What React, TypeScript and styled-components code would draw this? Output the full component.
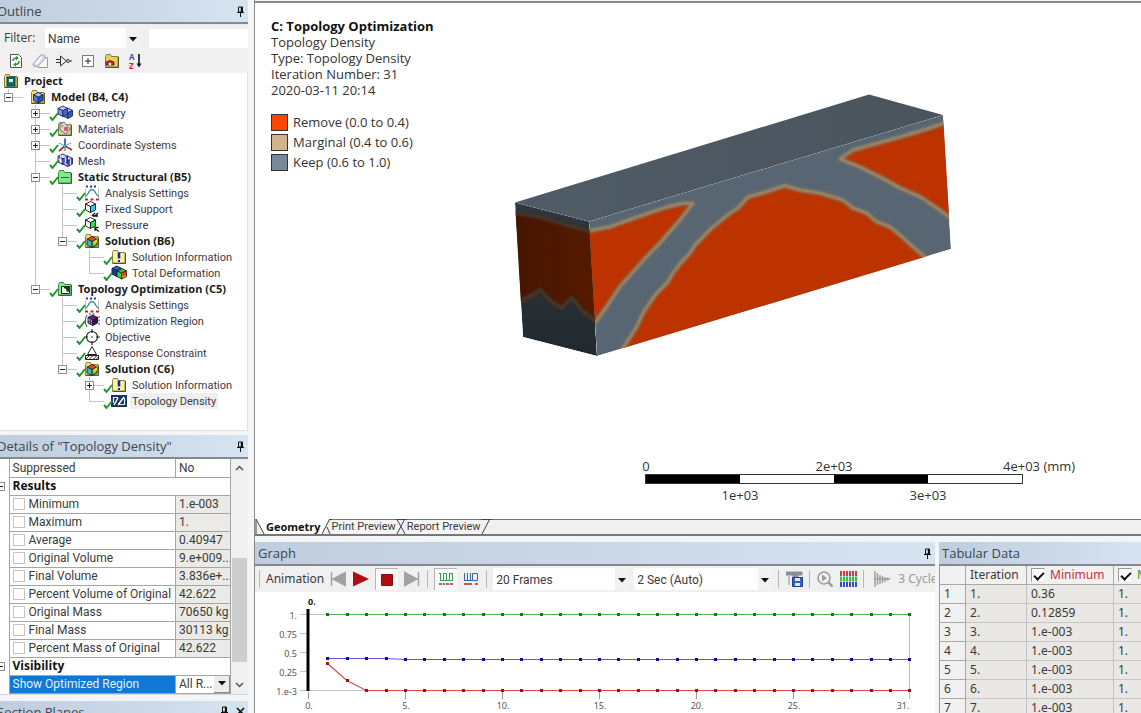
import React from "react";
import styled, { createGlobalStyle, css } from "styled-components";

const ui = `"Noto Sans", "Open Sans", sans-serif`;
const humanist = `"Open Sans", "Noto Sans", sans-serif`;
const compact = `Roboto, "Open Sans", sans-serif`;

const GlobalStyle = createGlobalStyle`
  * { box-sizing: border-box; }
  body { margin: 0; background: #f4f5f7; font: 12px/16px ${ui}; color: #3a3a3a; }
  button, select, input { font: inherit; color: inherit; margin: 0; }
`;

/* ---------- page frame ---------- */

const Workspace = styled.main`
  display: grid;
  grid-template-columns: 248px minmax(0, 1fr);
  column-gap: 6px;
  height: 100vh;
  overflow: hidden;
`;

const Sidebar = styled.div`
  display: flex;
  flex-direction: column;
  min-width: 0;
  overflow: hidden;
`;

const MainArea = styled.div`
  display: grid;
  grid-template-rows: minmax(0, 1fr) 17px 177px;
  min-width: 0;
  padding-top: 1px;
  border-left: 1px solid #8a8a8a;
`;

const TitleBar = styled.header<{ $pull?: boolean }>`
  display: flex;
  align-items: center;
  flex: none;
  height: 24px;
  padding: 0 3px 0 ${(p) => (p.$pull ? "0" : "3px")};
  background: linear-gradient(90deg, #bfcddd, #d6e3f0);
  border-bottom: 2px solid #858a90;
  overflow: hidden;
  h2 {
    flex: 1;
    margin: 0 0 0 ${(p) => (p.$pull ? "-3px" : "0")};
    font: 400 13px/22px ${humanist};
    color: #3c4654;
    white-space: nowrap;
  }
`;

const IconButton = styled.button`
  display: flex;
  align-items: center;
  justify-content: center;
  flex: none;
  padding: 0;
  border: 0;
  background: none;
`;

const Pin = () => (
  <IconButton aria-label="Pin panel">
    <svg width="9" height="11" viewBox="0 0 9 11">
      <path d="M2.500 1h4v5h-4zM1 6.500h7M4.500 7v4" fill="none" stroke="#111" />
      <path d="M5.500 1v5" stroke="#111" strokeWidth="1.400" />
    </svg>
  </IconButton>
);

/* ---------- combo box ---------- */

const ComboFrame = styled.div<{ $width: number; $height: number }>`
  position: relative;
  flex: none;
  width: ${(p) => p.$width}px;
  height: ${(p) => p.$height}px;
  background: #fff;
  font-family: ${compact};
  svg {
    position: absolute;
    right: 0;
    top: 0;
    height: 100%;
    background: #f1f1f1;
    pointer-events: none;
  }
  select {
    width: 100%;
    height: 100%;
    padding: 2px 14px 0 3px;
    border: 0;
    background: none;
    appearance: none;
  }
`;

const Combo = (p: { label: string; value: string; width: number; height: number; id?: string }) => (
  <ComboFrame $width={p.width} $height={p.height}>
    <select id={p.id} aria-label={p.label} defaultValue={p.value}>
      <option>{p.value}</option>
    </select>
    <svg width="14" viewBox="0 0 14 20">
      <path d="M3 9h8l-4 4.500z" fill="#111" />
    </svg>
  </ComboFrame>
);

/* ---------- outline ---------- */

const FilterRow = styled.div`
  display: flex;
  align-items: center;
  flex: none;
  height: 25px;
  padding: 3px 0 0 4px;
  background: #f0f0f0;
  label { width: 41px; font-family: ${humanist}; }
`;

const FilterText = styled.input`
  flex: 1;
  min-width: 0;
  height: 19px;
  margin-left: 9px;
  border: 0;
  background: #fff;
`;

const OutlineTools = styled.div`
  display: flex;
  align-items: center;
  flex: none;
  gap: 8px;
  height: 24px;
  padding-left: 8px;
  background: #f0f0f0;
`;

const Tree = styled.ul`
  flex: none;
  height: 358px;
  margin: 0 0 4px;
  padding: 0 0 0 3px;
  list-style: none;
  background: #fff;
  border-right: 1px solid #e2e2e2;
  border-bottom: 1px solid #e2e2e2;
`;

const TreeRow = styled.li`
  display: flex;
  height: 16px;
  font: 11px/17px ${compact};
  color: #3f3a42;
`;

const guideLine = "linear-gradient(#c4c4c4, #c4c4c4)";
const Guide = styled.span<{ $kind: string }>`
  position: relative;
  flex: none;
  width: 27px;
  height: 16px;
  background-repeat: no-repeat;
  ${(p) => p.$kind === "|" && css`background-image: ${guideLine}; background-size: 1px 16px; background-position: 5px 0;`}
  ${(p) => p.$kind === "T" && css`background-image: ${guideLine}, ${guideLine}; background-size: 1px 16px, 15px 1px; background-position: 5px 0, 5px 8px;`}
  ${(p) => p.$kind === "L" && css`background-image: ${guideLine}, ${guideLine}; background-size: 1px 8px, 15px 1px; background-position: 5px 0, 5px 8px;`}
`;

const Toggle = styled.button`
  display: block;
  width: 9px;
  height: 9px;
  margin: 4px 0 0 1px;
  padding: 0;
  border: 0;
  background: none;
  svg { display: block; }
`;

const CheckMark = styled.svg`
  position: absolute;
  right: -2px;
  top: 7px;
`;

const TreeLabel = styled.span<{ $bold?: boolean; $active?: boolean }>`
  margin-left: 3px;
  padding: 0 2px;
  white-space: nowrap;
  ${(p) => p.$bold && css`font-family: ${ui}; font-weight: 700; line-height: 16px; color: #1c1c1c;`}
  ${(p) => p.$active && css`background: #efefef;`}
`;

const ToggleBox = ({ open }: { open: boolean }) => (
  <svg width="9" height="9" viewBox="0 0 9 9">
    <rect x=".5" y=".5" width="8" height="8" fill="#fff" stroke="#8e8e8e" />
    <path d={open ? "M2 4.500h5" : "M2 4.500h5M4.500 2v5"} stroke="#222" />
  </svg>
);

const FolderShape = ({ fill = "#f0e070", edge = "#86803a" }) => (
  <>
    <path d="M1.500 3.500l1-2h4l1 2h6.500v10.500h-12.500z" fill={fill} stroke={edge} />
    <path d="M14.500 4v10.500h-13" fill="none" stroke="#55522c" />
  </>
);

const Cube = ({ x, y, s, top, left, right, edge }: { x: number; y: number; s: number; top: string; left: string; right: string; edge: string }) => (
  <g transform={`translate(${x} ${y}) scale(${s})`} stroke={edge} strokeWidth={0.9 / s} strokeLinejoin="round">
    <path d="M0 2.500L5 0l5 2.500-5 2.500z" fill={top} />
    <path d="M0 2.500l5 2.500v6l-5-2.500z" fill={left} />
    <path d="M10 2.500l-5 2.500v6l5-2.500z" fill={right} />
  </g>
);

const treeIcons: Record<string, React.ReactNode> = {
  project: (
    <>
      <FolderShape />
      <rect x="4" y="4" width="8" height="9" fill="#0d6f6c" stroke="#063c3a" />
      <path d="M6 6h4v3h-4z" fill="#d9f4f2" />
    </>
  ),
  model: (
    <>
      <FolderShape />
      <Cube x={3.5} y={3.5} s={0.95} top="#a9c3f5" left="#4c7be0" right="#2b55b8" edge="#14265c" />
    </>
  ),
  geometry: (
    <>
      <Cube x={6} y={3} s={0.95} top="#a9b9ee" left="#5a78d8" right="#3d57b8" edge="#1b2a68" />
      <Cube x={1} y={1} s={0.95} top="#b9c7f4" left="#7f99e6" right="#4b66c9" edge="#1b2a68" />
    </>
  ),
  materials: (
    <>
      <FolderShape fill="#dcd68a" />
      <path d="M3 3l4-2 6 7-4 5-6-4z" fill="#d8d8dc" stroke="#77777c" />
      <circle cx="9" cy="8" r="2.200" fill="#d2566c" />
      <circle cx="5" cy="5" r="1" fill="#fff" stroke="#666" strokeWidth=".6" />
    </>
  ),
  coords: (
    <>
      <path d="M8 9V1.500" stroke="#1d42d8" strokeWidth="1.600" />
      <path d="M8 9L2 14" stroke="#cf1b2b" strokeWidth="1.800" />
      <path d="M8 9l7 4" stroke="#cf1b2b" strokeWidth="1.600" />
      <path d="M8 9l-6-3M8 9l6-3" stroke="#3ac2cf" strokeWidth="1.200" />
      <path d="M8 9v5" stroke="#2fae49" strokeWidth="1.400" />
    </>
  ),
  mesh: (
    <>
      <Cube x={6} y={3} s={0.95} top="#cdd0f7" left="#8187dc" right="#5157b4" edge="#1f2168" />
      <Cube x={1} y={1} s={0.95} top="#cdd0f7" left="#989ee6" right="#6168c4" edge="#1f2168" />
      <path d="M3.500 4v6M8.500 4v6M13.500 6v6M1.500 6.500l4 2M7 10l4 2M3 2.500l5 2.500" stroke="#f2f2ff" strokeWidth=".8" />
    </>
  ),
  environment: (
    <>
      <FolderShape fill="#7fe88b" edge="#3b8e44" />
      <path d="M4 8.500h8" stroke="#2c6e35" />
    </>
  ),
  settings: (
    <>
      <path d="M1.500 3v10M14.500 3v10" stroke="#c4c4c4" />
      <path d="M1 11.500c3 0 3.500-7 7-7s4 7 7 7" fill="none" stroke="#3f8f7c" strokeWidth="1.300" />
      <path d="M2 1.500h2M6 1.500h2M10 1.500h2" stroke="#2438c8" strokeWidth="2" />
      <path d="M1 14.500h3M6.500 14.500h3M12 14.500h3" stroke="#c6202c" strokeWidth="1.800" />
    </>
  ),
  fixed: (
    <>
      <Cube x={1.5} y={0.5} s={1} top="#fff" left="#f3f3f3" right="#35c6f0" edge="#1a1a1a" />
      <path d="M8 15l3-3M11 15l3-3M9 15h5" stroke="#111" strokeWidth="1.300" />
    </>
  ),
  pressure: (
    <>
      <Cube x={1.5} y={0.5} s={1} top="#fff" left="#f3f3f3" right="#2fe048" edge="#1a1a1a" />
      <path d="M15 14.500l-4-3M11 14v-3.500h3.500" fill="none" stroke="#111" strokeWidth="1.300" />
    </>
  ),
  solution: (
    <>
      <FolderShape />
      <Cube x={3} y={3.5} s={1} top="#e8402c" left="#29b8d8" right="#38c23c" edge="#2b2b1c" />
      <path d="M9 9l4-3v3l-3 3z" fill="#f2d21f" />
    </>
  ),
  info: (
    <>
      <FolderShape fill="#fbf0a4" />
      <path d="M8 3.500v6" stroke="#1a25b8" strokeWidth="2.600" />
      <path d="M8 11v2" stroke="#1a25b8" strokeWidth="2" />
    </>
  ),
  deformation: (
    <>
      <Cube x={1} y={1} s={0.95} top="#2a5be0" left="#1837b4" right="#22b8c4" edge="#141a3c" />
      <Cube x={6} y={3.5} s={0.95} top="#2fbf46" left="#3fd24e" right="#e8a626" edge="#252510" />
      <path d="M12 8l3.500-1.500v3L12 11z" fill="#e3342a" />
    </>
  ),
  optimization: (
    <>
      <FolderShape fill="#8fe793" edge="#3b8e44" />
      <path d="M4.500 5.500h8v7h-8z" fill="#eafbe9" stroke="#222" />
      <path d="M7 5h6v5l-3 1-1-3-2-1z" fill="#1f3324" />
    </>
  ),
  region: (
    <>
      <path d="M5 1h7M15 3v9" stroke="#333" strokeDasharray="2 1.500" />
      <path d="M3 2q-3.500 6 0 12" fill="none" stroke="#444" />
      <Cube x={4} y={2} s={0.95} top="#5b2a78" left="#c48be4" right="#2c1640" edge="#1e0e2c" />
      <path d="M6.500 5v6.500M4 8l5 2" stroke="#3a1c50" strokeWidth=".8" />
    </>
  ),
  objective: (
    <g fill="none" stroke="#222" strokeWidth="1.200">
      <circle cx="8" cy="8" r="5.500" />
      <path d="M8 0v4M8 12v4M0 8h4M12 8h4" />
      <circle cx="8" cy="8" r=".8" fill="#111" stroke="none" />
    </g>
  ),
  constraint: (
    <g fill="none" stroke="#222">
      <path d="M8 1.500l-4.500 8h9z" />
      <path d="M1 10.500h14M1.500 10.500v4h13v-4M2 14l3.500-3.500M5 14.500l4-4M9 14.500l4-4M12 14.500l2.500-2.500" />
    </g>
  ),
  density: (
    <>
      <path d="M0 2h16v12H0z" fill="#16365e" />
      <path d="M2.500 10V4.500H7M13.500 5v6.500H8" fill="none" stroke="#e8f0f8" strokeWidth="1.200" />
      <path d="M3 12L7 5M7 12l6-8" stroke="#fff" strokeWidth="1.500" />
    </>
  ),
};

interface TreeItem {
  label: string;
  icon: string;
  guides?: string;
  bold?: boolean;
  toggle?: "open" | "closed";
  active?: boolean;
}

const outline: TreeItem[] = [
  { label: "Project", icon: "project", bold: true },
  { label: "Model (B4, C4)", icon: "model", guides: "L", bold: true, toggle: "open" },
  { label: "Geometry", icon: "geometry", guides: " T", toggle: "closed" },
  { label: "Materials", icon: "materials", guides: " T", toggle: "closed" },
  { label: "Coordinate Systems", icon: "coords", guides: " T", toggle: "closed" },
  { label: "Mesh", icon: "mesh", guides: " T" },
  { label: "Static Structural (B5)", icon: "environment", guides: " T", bold: true, toggle: "open" },
  { label: "Analysis Settings", icon: "settings", guides: " |T" },
  { label: "Fixed Support", icon: "fixed", guides: " |T" },
  { label: "Pressure", icon: "pressure", guides: " |T" },
  { label: "Solution (B6)", icon: "solution", guides: " |L", bold: true, toggle: "open" },
  { label: "Solution Information", icon: "info", guides: " | T" },
  { label: "Total Deformation", icon: "deformation", guides: " | L" },
  { label: "Topology Optimization (C5)", icon: "optimization", guides: " L", bold: true, toggle: "open" },
  { label: "Analysis Settings", icon: "settings", guides: "  T" },
  { label: "Optimization Region", icon: "region", guides: "  T" },
  { label: "Objective", icon: "objective", guides: "  T" },
  { label: "Response Constraint", icon: "constraint", guides: "  T" },
  { label: "Solution (C6)", icon: "solution", guides: "  L", bold: true, toggle: "open" },
  { label: "Solution Information", icon: "info", guides: "   T", toggle: "closed" },
  { label: "Topology Density", icon: "density", guides: "   L", active: true },
];

const OutlineTree = () => (
  <Tree>
    {outline.map((item, n) => {
      const guides = [...(item.guides ?? "")];
      return (
        <TreeRow key={n}>
          {guides.map((kind, g) => {
            const own = g === guides.length - 1;
            return (
              <Guide key={g} $kind={kind}>
                {own && item.toggle && (
                  <Toggle aria-label={`Toggle ${item.label}`}>
                    <ToggleBox open={item.toggle === "open"} />
                  </Toggle>
                )}
                {own && g > 0 && (
                  <CheckMark width="10" height="9" viewBox="0 0 10 9">
                    <path d="M1 5l2.500 3L9 1" fill="none" stroke="#1f9a2c" strokeWidth="2" />
                  </CheckMark>
                )}
              </Guide>
            );
          })}
          <svg width="16" height="16" viewBox="0 0 16 16">{treeIcons[item.icon]}</svg>
          <TreeLabel $bold={item.bold} $active={item.active}>{item.label}</TreeLabel>
        </TreeRow>
      );
    })}
  </Tree>
);

const outlineTools: [string, React.ReactNode][] = [
  ["Refresh", <>
    <path d="M2.500 1.500h8l3 3v10h-11z" fill="#fff" stroke="#555" />
    <path d="M5 8q0-3 4-3M11 8q0 3.500-4 3.500" fill="none" stroke="#2a9a3a" strokeWidth="1.600" />
    <path d="M8 2.800l3 2.200-3 2.200zM8 9.300l-3 2.200 3 2.200z" fill="#2a9a3a" />
  </>],
  ["Tag", <>
    <path d="M6.500 4.500h9v10h-9z" fill="#f8f8f8" stroke="#9a9a9a" />
    <path d="M1 11l8-9.500 3.500 1 1 3-8 8-3.500 0z" fill="#d4d4e8" stroke="#a8a8c0" />
    <path d="M4 11l6-7" stroke="#fff" strokeWidth="2" />
  </>],
  ["Filter", <path d="M4.500 3v10l6-5zM0 6.500h4M0 9.500h4M13 8h3M12 6.500a1.500 1.500 0 1 1 0 3 1.500 1.500 0 0 1 0-3" fill="none" stroke="#333" />],
  ["Expand", <>
    <rect x="2.500" y="2.500" width="11" height="11" fill="#fff" stroke="#777" />
    <path d="M5 8h6M8 5v6" stroke="#222" />
  </>],
  ["Hide folders", <>
    <FolderShape fill="#e6cf62" />
    <path d="M2 9q4-3 8 0v3h-8z" fill="#c4302c" stroke="#5c1512" strokeWidth=".8" />
    <circle cx="6" cy="11" r="1.300" fill="#fff" />
  </>],
  ["Sort", <>
    <text x="1" y="7" fontSize="8" fontWeight="700" fill="#2b5fb4">A</text>
    <text x="1" y="16" fontSize="8" fontWeight="700" fill="#c0272d">Z</text>
    <path d="M11 1v11" stroke="#111" strokeWidth="1.600" />
    <path d="M8.500 10.500h5l-2.500 4z" fill="#111" />
  </>],
];

/* ---------- details ---------- */

const DetailsBody = styled.div`
  display: grid;
  grid-template-columns: minmax(0, 1fr) 17px;
  flex: none;
  background: #fff;
  border-bottom: 1px solid #d8d8d8;
`;

const Col = styled.col<{ $width?: number }>`
  width: ${(p) => (p.$width ? `${p.$width}px` : "auto")};
`;

const DetailsTable = styled.table`
  width: 100%;
  table-layout: fixed;
  border-collapse: collapse;
  font-family: ${compact};
  line-height: 16px;
  th, td {
    height: 18px;
    padding: 0 0 0 3px;
    border: 1px solid #a5a5a5;
    border-top: 0;
    font-weight: 400;
    text-align: left;
    white-space: nowrap;
    overflow: hidden;
  }
`;

const Gutter = styled.td`
  && { border: 0; padding: 0; background: #fff; }
  button { margin: 0 0 0 -4px; }
`;

const GroupCell = styled.th`
  && { font-family: ${humanist}; font-weight: 700; color: #111; }
`;

const ValueCell = styled.td<{ $plain?: boolean }>`
  background: ${(p) => (p.$plain ? "#fff" : "#ebeae7")};
`;

const NameCell = styled.th<{ $selected?: boolean }>`
  ${(p) => p.$selected && css`background: #0f78d4; color: #e4f0fb;`}
`;

const NameLine = styled.label`
  display: flex;
  align-items: center;
  gap: 4px;
`;

const SmallCheck = styled.input`
  flex: none;
  appearance: none;
  width: 12px;
  height: 12px;
  border: 1px solid #c4c4c4;
  background: #fff;
`;

const RegionPicker = styled.div`
  display: flex;
  height: 17px;
  line-height: 17px;
  span { flex: 1; }
  button {
    width: 16px;
    border: 1px solid #8c8c8c;
    border-width: 0 1px 1px 0;
    background: #ececec;
  }
`;

const ScrollTrack = styled.div`
  display: flex;
  flex-direction: column;
  align-items: center;
  background: #f0f0f0;
`;

const ScrollArrow = styled(IconButton)<{ $height: number }>`
  width: 17px;
  height: ${(p) => p.$height}px;
  padding-top: ${(p) => p.$height - 18}px;
`;

const ScrollThumb = styled.div`
  width: 15px;
  height: 104px;
  margin-top: auto;
  background: #cdcdcd;
`;

const results: [string, string][] = [
  ["Minimum", "1.e-003"],
  ["Maximum", "1."],
  ["Average", "0.40947"],
  ["Original Volume", "9.e+009..."],
  ["Final Volume", "3.836e+..."],
  ["Percent Volume of Original", "42.622"],
  ["Original Mass", "70650 kg"],
  ["Final Mass", "30113 kg"],
  ["Percent Mass of Original", "42.622"],
];

const Group = ({ name }: { name: string }) => (
  <tr>
    <Gutter><Toggle aria-label={`Collapse ${name}`}><ToggleBox open /></Toggle></Gutter>
    <GroupCell colSpan={2}>{name}</GroupCell>
  </tr>
);

const Details = () => (
  <DetailsBody>
    <DetailsTable>
      <colgroup><Col $width={9} /><Col /><Col $width={55} /></colgroup>
      <tbody>
        <tr><Gutter /><NameCell>Suppressed</NameCell><ValueCell $plain>No</ValueCell></tr>
        <Group name="Results" />
        {results.map(([name, value]) => (
          <tr key={name}>
            <Gutter />
            <NameCell><NameLine><SmallCheck type="checkbox" />{name}</NameLine></NameCell>
            <ValueCell>{value}</ValueCell>
          </tr>
        ))}
        <Group name="Visibility" />
        <tr>
          <Gutter />
          <NameCell $selected>Show Optimized Region</NameCell>
          <ValueCell $plain>
            <RegionPicker>
              <span>All R...</span>
              <IconButton aria-label="Choose region">
                <svg width="8" height="5" viewBox="0 0 8 5"><path d="M0 0h8L4 4.500z" fill="#111" /></svg>
              </IconButton>
            </RegionPicker>
          </ValueCell>
        </tr>
      </tbody>
    </DetailsTable>
    <ScrollTrack>
      <ScrollArrow aria-label="Scroll up" $height={18}>
        <svg width="9" height="6" viewBox="0 0 9 6"><path d="M1 5l3.500-3.500L8 5" fill="none" stroke="#555" strokeWidth="1.500" /></svg>
      </ScrollArrow>
      <ScrollThumb />
      <ScrollArrow aria-label="Scroll down" $height={32}>
        <svg width="9" height="6" viewBox="0 0 9 6"><path d="M1 1l3.500 3.500L8 1" fill="none" stroke="#555" strokeWidth="1.500" /></svg>
      </ScrollArrow>
    </ScrollTrack>
  </DetailsBody>
);

const SectionTitle = styled(TitleBar)`
  margin-top: 6px;
  gap: 7px;
`;

/* ---------- viewer ---------- */

const Viewer = styled.section`
  display: grid;
  grid-template-rows: minmax(0, 1fr) auto;
  min-height: 0;
  padding: 15px 0 16px;
  background: #fff;
  border-top: 2px solid #8a8a8a;
  font: 13px/16px ${humanist};
  color: #333;
`;

const Annotation = styled.div`
  grid-area: 1 / 1;
  padding-left: 16px;
  h1 { margin: 0; font-size: 13px; font-weight: 700; line-height: 16px; color: #111; }
  p { margin: 0; }
`;

const Legend = styled.ul`
  margin: 14px 0 0;
  padding: 0;
  list-style: none;
  li { display: flex; align-items: center; gap: 5px; height: 20px; }
`;

const Swatch = styled.span<{ $color: string }>`
  width: 17px;
  height: 17px;
  border: 1px solid #333;
  background: ${(p) => p.$color};
`;

const ModelDrawing = styled.svg`
  grid-area: 1 / 1;
  justify-self: center;
  margin: 74px 0 0 72px;
`;

const Ruler = styled.div`
  grid-area: 2 / 1;
  justify-self: center;
  display: grid;
  grid-template-columns: repeat(5, 94px);
  margin-left: 272px;
  text-align: center;
  white-space: nowrap;
`;

const UnitLabel = styled.span`
  padding-left: 28px;
  text-align: left;
`;

const RulerBar = styled.div`
  grid-column: 1 / -1;
  display: grid;
  grid-template-columns: repeat(4, 1fr);
  height: 10px;
  margin: 0 46px 3px;
  border: 1px solid #333;
  span:nth-child(odd) { background: #000; }
`;

const TanEdge = ({ d }: { d: string }) => (
  <g fill="none" strokeLinejoin="round" filter="url(#soften)">
    <path d={d} stroke="#706c62" strokeWidth="5" />
    <path d={d} stroke="#ae8f63" strokeWidth="2" />
  </g>
);

const leftVoid = "M586 231.500L590.700 230.500L610 226.700L633 218.500L667 207L683 203.300L693 203.300L680 220L660 243L646.700 256.700L620 286.700L606.700 306.700L596.700 320.700L586 334";
const archVoid = "M618 358L624 346.700L636.700 326.700L643 313L655 295L667 283L673 273L681.700 261.700L690 253L695 245L711.700 228L730 213L738 208L748 197L766.700 191.700L785 185.500L800 190L820 193L843 200L853 208L866.700 213L876.700 221.700L890 226.700L900 235L913 246.700L925 257L934 266";
const rightVoid = "M956 119L944 123.300L926.700 129L906.700 135L883 141.700L853 150L840 159L860 167L880 177L900 188L920 196.700L936.700 208L956 222";
const endVoid = "M508 212L516 213L540 217L567 225L600 234L604 324L595 320L583 311.700L571.700 298L561.700 308L551.700 301.700L540 290L533 295L521.700 300.700L508 304";

const Beam = () => (
  <ModelDrawing width="444" height="268" viewBox="512 92 444 268" role="img" aria-label="Optimized beam">
    <defs>
      <clipPath id="front"><path d="M589 221.500L943 115L951 249L597 356z" /></clipPath>
      <clipPath id="end"><path d="M515 202.500L589 221.500L597 356L523 337z" /></clipPath>
      <filter id="soften" filterUnits="userSpaceOnUse" x="500" y="90" width="470" height="290"><feGaussianBlur stdDeviation=".8" /></filter>
      <linearGradient id="endVoidShade" x1="0" x2="1"><stop offset="0" stopColor="#451500" /><stop offset="1" stopColor="#571b00" /></linearGradient>
      <linearGradient id="endShade" x1="0" x2="0" y1="0" y2="1"><stop offset="0" stopColor="#30383f" /><stop offset="1" stopColor="#22292e" /></linearGradient>
      <linearGradient id="topShade" x1="0" x2="1"><stop offset="0" stopColor="#4f5b66" /><stop offset="1" stopColor="#4a545d" /></linearGradient>
    </defs>
    <path d="M515 202.500L869 94.500L943 115L589 221.500z" fill="url(#topShade)" />
    <g clipPath="url(#front)">
      <path d="M589 221.500L943 115L951 249L597 356z" fill="#586673" />
      {[leftVoid, archVoid, rightVoid].map((d) => (
        <g key={d}>
          <path d={d} fill="#bd3300" />
          <TanEdge d={d} />
        </g>
      ))}
    </g>
    <g clipPath="url(#end)">
      <path d="M515 202.500L589 221.500L597 356L523 337z" fill="url(#endShade)" />
      <path d={endVoid} fill="url(#endVoidShade)" />
      <g fill="none" filter="url(#soften)">
        <path d={endVoid} stroke="#3d2c20" strokeWidth="5" />
        <path d={endVoid} stroke="#4a3c2c" strokeWidth="2" />
      </g>
    </g>
  </ModelDrawing>
);

/* ---------- view tabs ---------- */

const TabStrip = styled.nav`
  display: flex;
  background: #f0f0f0;
  border-bottom: 2px solid #777;
  font: 11px/14px ${compact};
`;

const TabButton = styled.button<{ $active?: boolean }>`
  height: 15px;
  padding: 0;
  border: 0;
  border-top: 1px solid ${(p) => (p.$active ? "#fff" : "#777")};
  background: ${(p) => (p.$active ? "#fff" : "#f5f5f5")};
  color: #3a3a3a;
  ${(p) => p.$active && css`font-family: ${humanist}; font-weight: 700; color: #111;`}
`;

const TabRest = styled.div`
  flex: 1;
  border-top: 1px solid #777;
`;

const TabEdge = ({ d, fill }: { d: string; fill?: string }) => (
  <svg width="11" height="15" viewBox="0 0 11 15">
    {fill && <path d={fill} fill="#fff" />}
    <path d={d} fill="none" stroke="#444" />
  </svg>
);

/* ---------- graph ---------- */

const BottomRow = styled.div`
  display: grid;
  grid-template-columns: minmax(0, 1fr) 202px;
  column-gap: 4px;
  min-width: 0;
  padding-top: 6px;
`;

const Panel = styled.section`
  min-width: 0;
  overflow: hidden;
  background: #fff;
`;

const GraphTools = styled.div`
  display: flex;
  align-items: center;
  height: 26px;
  padding-left: 3px;
  gap: 5px;
  background: #f0f0f0;
  white-space: nowrap;
  overflow: hidden;
`;

const ToolButton = styled(IconButton)<{ $pressed?: boolean; $width?: number }>`
  width: ${(p) => p.$width ?? 18}px;
  height: 22px;
  ${(p) => p.$pressed && css`background: #fafafa; border: 1px solid #b5b5b5; border-width: 1px 0 0 1px;`}
`;

const Divider = styled.span`
  flex: none;
  width: 1px;
  height: 18px;
  margin: 0 1px;
  background: #b8b8b8;
`;

const CyclesText = styled.span`
  color: #9a9a9a;
`;

const Chart = styled.svg`
  display: block;
  font: 9px ${ui};
  fill: #555;
`;

const px = (i: number) => 53 + i * 19.4;
const steps = Array.from({ length: 31 }, (_, i) => i + 1);
const yMax = () => 22;
const yAvg = (i: number) => (i < 5 ? 66 : 67);
const yMin = (i: number) => (i === 1 ? 71 : i === 2 ? 88 : 98);

const Series = ({ y, line, dot }: { y: (i: number) => number; line: string; dot: string }) => (
  <g>
    <polyline points={steps.map((i) => `${px(i)},${y(i) + 0.5}`).join(" ")} fill="none" stroke={line} strokeWidth="1.200" />
    {steps.map((i) => <rect key={i} x={Math.round(px(i)) - 1} y={y(i) - 1} width="3" height="3" fill={dot} />)}
  </g>
);

const IterationChart = () => (
  <Chart width="680" height="121" viewBox="0 0 680 121">
    <path d="M45 22.500h27M45 41.500h7M45 60.500h7M45 79.500h7M45 98.500h65" stroke="#c4c4c4" />
    {([["1.", 23], ["0.75", 42], ["0.5", 61], ["0.25", 80], ["1.e-3", 99]] as [string, number][]).map(([t, y]) => (
      <text key={t} x="42" y={y + 4} textAnchor="end">{t}</text>
    ))}
    {[0, 5, 10, 15, 20, 25].map((i) => (
      <g key={i}>
        <path d={`M${Math.round(px(i)) + 0.5} 100v7`} stroke="#c08a8a" />
        <text x={px(i) + 1} y="117" textAnchor="middle">{`${i}.`}</text>
      </g>
    ))}
    <path d={`M${Math.round(px(31)) + 0.5} 23v84`} stroke="#bdbdbd" />
    <text x={px(31)} y="117" textAnchor="end">31.</text>
    <path d="M53 17v82" stroke="#000" strokeWidth="3" />
    <text x="53" y="13" fontWeight="700" fill="#222">0.</text>
    <Series y={yMax} line="#58b058" dot="#0a7d14" />
    <Series y={yAvg} line="#5a5ae0" dot="#0c0ca4" />
    <Series y={yMin} line="#d84a4a" dot="#a80c14" />
  </Chart>
);

const Graph = () => (
  <Panel>
    <TitleBar><h2>Graph</h2><Pin /></TitleBar>
    <GraphTools>
      <Divider />
      <span>Animation</span>
      <ToolButton aria-label="First frame">
        <svg width="16" height="16"><path d="M1.500 1v14M16 1v14L3 8z" fill="#a2a2a2" stroke="#a2a2a2" strokeWidth="1.500" /></svg>
      </ToolButton>
      <ToolButton aria-label="Play">
        <svg width="16" height="16"><path d="M0 0.500l16 7.500-16 7.500z" fill="#b00c12" /></svg>
      </ToolButton>
      <ToolButton aria-label="Stop" $pressed $width={23}>
        <svg width="12" height="12"><path d="M.5.500h11v11h-11z" fill="#b00c12" stroke="#8c0a10" /></svg>
      </ToolButton>
      <ToolButton aria-label="Last frame">
        <svg width="16" height="16"><path d="M14.500 1v14M0 1v14L13 8z" fill="#a2a2a2" stroke="#a2a2a2" strokeWidth="1.500" /></svg>
      </ToolButton>
      <Divider />
      <ToolButton aria-label="Distributed" $pressed $width={23}>
        <svg width="15" height="13"><path d="M0 .5h2M1.500 0v8M4.500 0v8M7.500 0v8M10.500 0v8M13.500 0v8M1 7.500h13M4 .5h3M10 .5h4" fill="none" stroke="#3f9a4c" /><path d="M0 11h3M4 11h2M7 11h3M11 11h3" stroke="#b8202c" strokeWidth="1.500" /></svg>
      </ToolButton>
      <ToolButton aria-label="Result sets">
        <svg width="15" height="13"><path d="M.5 0v8M3.500 0v8M6.500 0v8M8.500.500h5v7h-5zM0 7.500h8" fill="none" stroke="#3c62b8" /><path d="M0 11h8M11 11h3" stroke="#b8202c" strokeWidth="1.500" /></svg>
      </ToolButton>
      <Divider />
      <Combo label="Frames" value="20 Frames" width={136} height={22} />
      <Combo label="Duration" value="2 Sec (Auto)" width={138} height={22} />
      <Divider />
      <ToolButton aria-label="Export video">
        <svg width="17" height="16"><path d="M0 1h16v3h-4v3h-5v-3h-7zM3 5v9" fill="#8a9096" stroke="#8a9096" /><path d="M6.500 6.500h10v9h-10z" fill="#3764c4" stroke="#1e3f8c" /><path d="M9 7h5v3h-5zM9 12h5v3h-5z" fill="#dfe8f8" /></svg>
      </ToolButton>
      <Divider />
      <ToolButton aria-label="Zoom to fit">
        <svg width="17" height="16"><g fill="none" stroke="#9a9a9a" strokeWidth="1.500"><circle cx="7" cy="7" r="6" /><path d="M11.500 11.500l4 4" strokeWidth="2.400" /></g><path d="M5 3.500l5 3.500-5 3.500z" fill="#9a9a9a" /></svg>
      </ToolButton>
      <ToolButton aria-label="Contour bands">
        <svg width="17" height="16"><g strokeWidth="5" strokeDasharray="2 1"><path d="M0 2.500h17" stroke="#e0344a" /><path d="M0 8h17" stroke="#2fc04a" /><path d="M0 13.500h17" stroke="#3a48d0" /></g></svg>
      </ToolButton>
      <Divider />
      <ToolButton aria-label="Cycles" $width={23}>
        <svg width="16" height="16"><path d="M1 0v16M3.500 2v12M6 4v9M8.500 5v7M11 6v5M13.500 6.500v3M0 8h16" stroke="#a0a0a0" strokeWidth="1.500" /></svg>
      </ToolButton>
      <CyclesText>3 Cycles</CyclesText>
    </GraphTools>
    <IterationChart />
  </Panel>
);

/* ---------- tabular data ---------- */

const DataTable = styled.table`
  width: 280px;
  table-layout: fixed;
  border-collapse: collapse;
  border-left: 1px solid #9a9a9a;
  line-height: 16px;
  th, td {
    height: 19px;
    padding: 0 0 0 4px;
    border-right: 1px solid #c2c2c2;
    border-bottom: 1px solid #c6c6c6;
    background: #e9e8e5;
    font-weight: 400;
    text-align: left;
    white-space: nowrap;
  }
  th { background: #f1f1f1; border-color: #a8a8a8; }
  thead th { height: 18px; }
`;

const SeriesHead = styled.label<{ $color: string }>`
  display: flex;
  align-items: center;
  gap: 5px;
  color: ${(p) => p.$color};
`;

const HeadCheck = styled.input`
  appearance: none;
  width: 14px;
  height: 14px;
  border: 1px solid #999;
  border-right-color: #eee;
  border-bottom-color: #eee;
  background: #fff;
  position: relative;
  &:checked::after {
    content: "";
    position: absolute;
    left: 4px;
    top: 1px;
    width: 4px;
    height: 8px;
    border: solid #111;
    border-width: 0 2px 2px 0;
    transform: rotate(45deg);
  }
`;

const minima = ["0.36", "0.12859", "1.e-003", "1.e-003", "1.e-003", "1.e-003", "1.e-003"];

const TabularData = () => (
  <Panel>
    <TitleBar><h2>Tabular Data</h2></TitleBar>
    <DataTable>
      <colgroup><Col $width={26} /><Col $width={61} /><Col $width={87} /><Col /></colgroup>
      <thead>
        <tr>
          <th aria-label="Row" />
          <th>Iteration</th>
          <th><SeriesHead $color="#c8323c"><HeadCheck type="checkbox" defaultChecked />Minimum</SeriesHead></th>
          <th><SeriesHead $color="#2c9a3c"><HeadCheck type="checkbox" defaultChecked />Maximum</SeriesHead></th>
        </tr>
      </thead>
      <tbody>
        {minima.map((value, n) => (
          <tr key={n}><th>{n + 1}</th><td>{n + 1}.</td><td>{value}</td><td>1.</td></tr>
        ))}
      </tbody>
    </DataTable>
  </Panel>
);

/* ---------- app ---------- */

export default function App() {
  return (
    <>
      <GlobalStyle />
      <Workspace>
        <Sidebar>
          <TitleBar $pull><h2>Outline</h2><Pin /></TitleBar>
          <FilterRow>
            <label htmlFor="filter-kind">Filter:</label>
            <Combo id="filter-kind" label="Filter by" value="Name" width={95} height={20} />
            <FilterText aria-label="Filter text" />
          </FilterRow>
          <OutlineTools>
            {outlineTools.map(([name, art]) => (
              <IconButton key={name} aria-label={name}>
                <svg width="16" height="16" viewBox="0 0 16 16">{art}</svg>
              </IconButton>
            ))}
          </OutlineTools>
          <OutlineTree />
          <TitleBar $pull><h2>Details of "Topology Density"</h2><Pin /></TitleBar>
          <Details />
          <SectionTitle $pull>
            <h2>Section Planes</h2>
            <Pin />
            <IconButton aria-label="Close">
              <svg width="9" height="9"><path d="M1 1l7 7M8 1l-7 7" stroke="#111" strokeWidth="1.600" /></svg>
            </IconButton>
          </SectionTitle>
        </Sidebar>
        <MainArea>
          <Viewer>
            <Annotation>
              <h1>C: Topology Optimization</h1>
              <p>Topology Density</p>
              <p>Type: Topology Density</p>
              <p>Iteration Number: 31</p>
              <p>2020-03-11 20:14</p>
              <Legend>
                <li><Swatch $color="#ff4500" />Remove (0.0 to 0.4)</li>
                <li><Swatch $color="#d2b48c" />Marginal (0.4 to 0.6)</li>
                <li><Swatch $color="#778899" />Keep (0.6 to 1.0)</li>
              </Legend>
            </Annotation>
            <Beam />
            <Ruler>
              <span>0</span><span /><span>2e+03</span><span /><UnitLabel>4e+03 (mm)</UnitLabel>
              <RulerBar><span /><span /><span /><span /></RulerBar>
              <span /><span>1e+03</span><span /><span>3e+03</span>
            </Ruler>
          </Viewer>
          <TabStrip>
            <TabEdge d="M1 0l8 15M1 0v15" fill="M1 0h10v15h-2z" />
            <TabButton $active>Geometry</TabButton>
            <TabEdge d="M1 15L8.500.500M6 8l3 7M8 .5h3" fill="M0 0h8l-7 15h-1z" />
            <TabButton>Print Preview</TabButton>
            <TabEdge d="M1 15L8.500.500M1 .5l8 14.500M0 .5h11" />
            <TabButton>Report Preview</TabButton>
            <TabEdge d="M1 15L8.500.500M0 .5h11" />
            <TabRest />
          </TabStrip>
          <BottomRow>
            <Graph />
            <TabularData />
          </BottomRow>
        </MainArea>
      </Workspace>
    </>
  );
}
